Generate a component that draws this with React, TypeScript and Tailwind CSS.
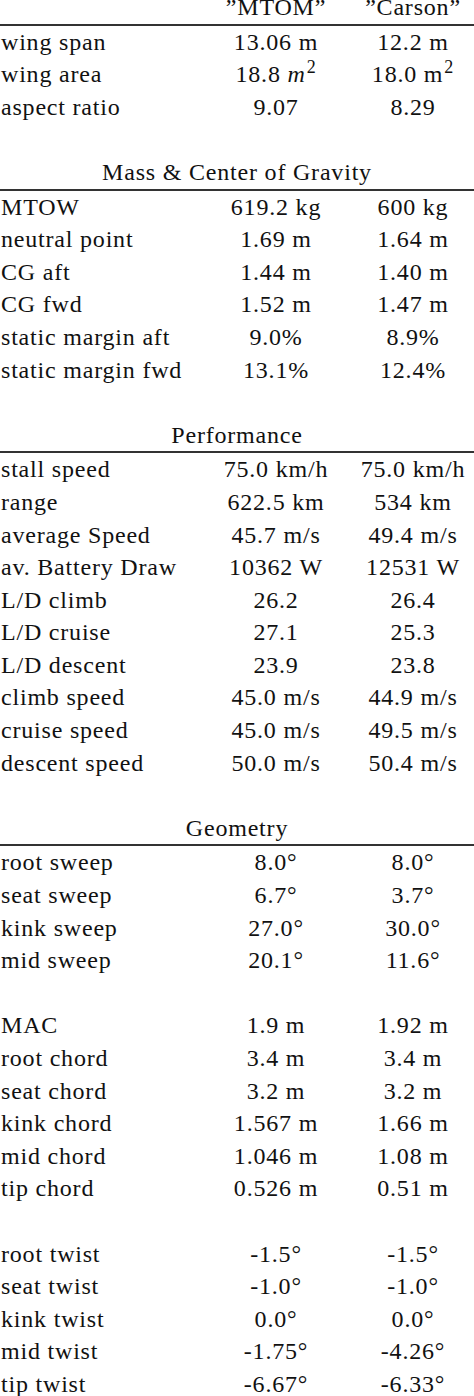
import React from 'react'

type Cell = React.ReactNode
type Row =
  | { kind: 'data'; label: string; a: Cell; b: Cell; rule?: boolean }
  | { kind: 'head'; title: string }
  | { kind: 'blank' }

const deg = (v: string) => <>{v}°</>
const sq = <sup className="text-[18px] relative -top-[9px] align-baseline ml-[1px]">2</sup>

const rows: Row[] = [
  { kind: 'data', label: '', a: '”MTOM”', b: '”Carson”', rule: true },
  { kind: 'data', label: 'wing span', a: '13.06 m', b: '12.2 m' },
  { kind: 'data', label: 'wing area', a: <>18.8 <i>m</i>{sq}</>, b: <>18.0 m{sq}</> },
  { kind: 'data', label: 'aspect ratio', a: '9.07', b: '8.29' },
  { kind: 'blank' },
  { kind: 'head', title: 'Mass & Center of Gravity' },
  { kind: 'data', label: 'MTOW', a: '619.2 kg', b: '600 kg' },
  { kind: 'data', label: 'neutral point', a: '1.69 m', b: '1.64 m' },
  { kind: 'data', label: 'CG aft', a: '1.44 m', b: '1.40 m' },
  { kind: 'data', label: 'CG fwd', a: '1.52 m', b: '1.47 m' },
  { kind: 'data', label: 'static margin aft', a: '9.0%', b: '8.9%' },
  { kind: 'data', label: 'static margin fwd', a: '13.1%', b: '12.4%' },
  { kind: 'blank' },
  { kind: 'head', title: 'Performance' },
  { kind: 'data', label: 'stall speed', a: '75.0 km/h', b: '75.0 km/h' },
  { kind: 'data', label: 'range', a: '622.5 km', b: '534 km' },
  { kind: 'data', label: 'average Speed', a: '45.7 m/s', b: '49.4 m/s' },
  { kind: 'data', label: 'av. Battery Draw', a: '10362 W', b: '12531 W' },
  { kind: 'data', label: 'L/D climb', a: '26.2', b: '26.4' },
  { kind: 'data', label: 'L/D cruise', a: '27.1', b: '25.3' },
  { kind: 'data', label: 'L/D descent', a: '23.9', b: '23.8' },
  { kind: 'data', label: 'climb speed', a: '45.0 m/s', b: '44.9 m/s' },
  { kind: 'data', label: 'cruise speed', a: '45.0 m/s', b: '49.5 m/s' },
  { kind: 'data', label: 'descent speed', a: '50.0 m/s', b: '50.4 m/s' },
  { kind: 'blank' },
  { kind: 'head', title: 'Geometry' },
  { kind: 'data', label: 'root sweep', a: deg('8.0'), b: deg('8.0') },
  { kind: 'data', label: 'seat sweep', a: deg('6.7'), b: deg('3.7') },
  { kind: 'data', label: 'kink sweep', a: deg('27.0'), b: deg('30.0') },
  { kind: 'data', label: 'mid sweep', a: deg('20.1'), b: deg('11.6') },
  { kind: 'blank' },
  { kind: 'data', label: 'MAC', a: '1.9 m', b: '1.92 m' },
  { kind: 'data', label: 'root chord', a: '3.4 m', b: '3.4 m' },
  { kind: 'data', label: 'seat chord', a: '3.2 m', b: '3.2 m' },
  { kind: 'data', label: 'kink chord', a: '1.567 m', b: '1.66 m' },
  { kind: 'data', label: 'mid chord', a: '1.046 m', b: '1.08 m' },
  { kind: 'data', label: 'tip chord', a: '0.526 m', b: '0.51 m' },
  { kind: 'blank' },
  { kind: 'data', label: 'root twist', a: deg('-1.5'), b: deg('-1.5') },
  { kind: 'data', label: 'seat twist', a: deg('-1.0'), b: deg('-1.0') },
  { kind: 'data', label: 'kink twist', a: deg('0.0'), b: deg('0.0') },
  { kind: 'data', label: 'mid twist', a: deg('-1.75'), b: deg('-4.26') },
  { kind: 'data', label: 'tip twist', a: deg('-6.67'), b: deg('-6.33') },
]

export default function App() {
  return (
    <div className="w-[474px] h-[1396px] overflow-hidden bg-white text-[#111] font-['Liberation_Serif',serif] text-[24px] tracking-[0.8px]">
      <div className="mt-[-9px]">
        {rows.map((r, i) => {
          if (r.kind === 'blank') return <div key={i} className="h-[32.6px]" />
          if (r.kind === 'head')
            return (
              <div key={i} className="h-[34.6px] leading-[32.6px] text-center border-b-2 border-[#333]">
                {r.title}
              </div>
            )
          return (
            <div
              key={i}
              className={`flex leading-[32.6px] whitespace-nowrap ${r.rule ? 'h-[34.6px] border-b-2 border-[#333]' : 'h-[32.6px]'}`}
            >
              <div className="w-[200px] pl-[1px]">{r.label}</div>
              <div className="w-[152px] text-center">{r.a}</div>
              <div className="w-[122px] text-center">{r.b}</div>
            </div>
          )
        })}
      </div>
    </div>
  )
}
